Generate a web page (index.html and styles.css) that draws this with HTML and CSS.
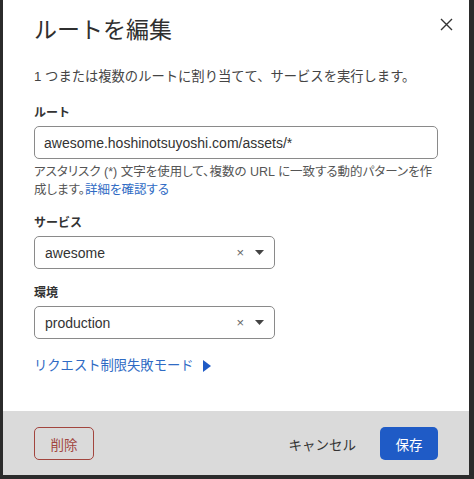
FILE: index.html
```html
<!DOCTYPE html>
<html lang="ja">

<head>
  <meta charset="UTF-8">
  <meta name="viewport" content="width=device-width, initial-scale=1.0">
  <title>ルートを編集</title>
  <link rel="stylesheet" href="styles.css">
</head>

<body>
  <div class="backdrop">
    <div class="modal">
      <div class="modal-body">
        <div class="modal-head">
          <h1>ルートを編集</h1>
          <button class="close-btn" aria-label="閉じる">
            <svg width="13" height="13" viewBox="0 0 13 13">
              <path d="M1 1L12 12M12 1L1 12" stroke="#333" stroke-width="1.4" fill="none" />
            </svg>
          </button>
        </div>
        <p class="intro">1 つまたは複数のルートに割り当てて、サービスを実行します。</p>

        <div class="field">
          <label class="field-label">ルート</label>
          <div class="text-input">awesome.hoshinotsuyoshi.com/assets/*</div>
          <p class="help">アスタリスク (*) 文字を使用して、複数の URL に一致する動的パターンを作成します。<a href="#">詳細を確認する</a></p>
        </div>

        <div class="field">
          <label class="field-label">サービス</label>
          <div class="select">
            <span class="select-value">awesome</span>
            <span class="select-clear">&times;</span>
            <svg class="select-caret" width="9" height="5" viewBox="0 0 9 5"><path d="M0 0H9L4.5 5Z" fill="#444" /></svg>
          </div>
        </div>

        <div class="field">
          <label class="field-label">環境</label>
          <div class="select">
            <span class="select-value">production</span>
            <span class="select-clear">&times;</span>
            <svg class="select-caret" width="9" height="5" viewBox="0 0 9 5"><path d="M0 0H9L4.5 5Z" fill="#444" /></svg>
          </div>
        </div>

        <a class="toggle" href="#">リクエスト制限失敗モード
          <svg width="8" height="12" viewBox="0 0 8 12"><path d="M0 0L8 6L0 12Z" fill="#1f5bc6" /></svg>
        </a>
      </div>

      <div class="modal-foot">
        <button class="btn btn-danger">削除</button>
        <div class="foot-right">
          <button class="btn btn-plain">キャンセル</button>
          <button class="btn btn-primary">保存</button>
        </div>
      </div>
    </div>
  </div>
</body>

</html>
```

FILE: styles.css
```css
body {
  margin: 0;
  background: #2b2b2b;
  font-family: "Liberation Sans", "Noto Sans CJK JP", sans-serif;
  color: #333;
}

.backdrop {
  height: 479px;
  padding-left: 3px;
}

.modal {
  width: 466px;
  height: 475px;
  background: #fff;
  display: flex;
  flex-direction: column;
}

.modal-body {
  flex: 1;
  padding: 15px 31px 0;
}

.modal-head {
  display: flex;
  justify-content: space-between;
  align-items: flex-start;
}

.modal-head h1 {
  margin: 0;
  font-size: 23px;
  line-height: 30px;
  font-weight: 400;
  color: #2f2f2f;
}

.close-btn {
  margin: 3px -15px 0 0;
  padding: 0;
  border: none;
  background: none;
  width: 13px;
  height: 13px;
  display: flex;
  cursor: pointer;
}

.intro {
  margin: 22px 0 0;
  font-size: 13.3px;
  line-height: 20px;
  color: #444;
}

.field {
  margin-top: 18px;
}

.field + .field {
  margin-top: 16px;
}

.field-label {
  display: block;
  font-size: 12px;
  line-height: 16px;
  font-weight: 700;
  color: #333;
  margin-bottom: 5px;
}

.text-input {
  height: 33px;
  box-sizing: border-box;
  border: 1px solid #8a8a8a;
  border-radius: 5px;
  padding: 0 9px;
  display: flex;
  align-items: center;
  font-size: 14px;
  color: #333;
}

.help {
  margin: 4px 0 0;
  font-size: 12.5px;
  line-height: 18px;
  color: #555;
  font-feature-settings: "palt";
}

.help a {
  color: #2f6bc4;
  text-decoration: none;
}

.select {
  width: 241px;
  height: 33px;
  box-sizing: border-box;
  border: 1px solid #8a8a8a;
  border-radius: 5px;
  padding: 0 10px;
  display: flex;
  align-items: center;
  font-size: 14px;
  color: #333;
}

.select-value {
  flex: 1;
}

.select-clear {
  font-size: 13px;
  color: #666;
  margin-right: 11px;
}

.toggle {
  display: inline-flex;
  align-items: center;
  gap: 9px;
  margin-top: 17px;
  font-size: 13.3px;
  line-height: 20px;
  color: #2f6bc4;
  text-decoration: none;
}

.modal-foot {
  height: 64px;
  box-sizing: border-box;
  background: #dadada;
  padding: 16px 31px 15px;
  display: flex;
  justify-content: space-between;
  align-items: flex-start;
}

.foot-right {
  display: flex;
  gap: 12px;
}

.btn {
  height: 33px;
  border-radius: 5px;
  font-family: inherit;
  font-size: 13.5px;
  cursor: pointer;
}

.btn-danger {
  width: 60px;
  background: transparent;
  border: 1px solid #a2453e;
  color: #a2453e;
}

.btn-plain {
  padding: 0 12px;
  background: transparent;
  border: none;
  color: #333;
}

.btn-primary {
  width: 58px;
  background: #1f5bc6;
  border: none;
  color: #fff;
}
```
